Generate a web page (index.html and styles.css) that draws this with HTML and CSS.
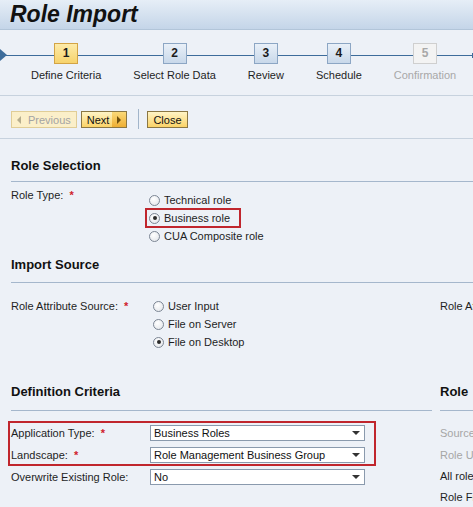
FILE: index.html
```html
<!DOCTYPE html>
<html lang="en">
<head>
    <meta charset="UTF-8">
    <meta name="viewport" content="width=device-width, initial-scale=1.0">
    <title>Role Import</title>
    <link rel="stylesheet" href="styles.css">
</head>
<body>
    <div class="title-bar">
        <h1>Role Import</h1>
    </div>

    <!-- wizard steps -->
    <div class="roadmap">
        <div class="step current">
            <span class="step-no">1</span>
            <span class="step-label">Define Criteria</span>
        </div>
        <div class="step">
            <span class="step-no">2</span>
            <span class="step-label">Select Role Data</span>
        </div>
        <div class="step">
            <span class="step-no">3</span>
            <span class="step-label">Review</span>
        </div>
        <div class="step">
            <span class="step-no">4</span>
            <span class="step-label">Schedule</span>
        </div>
        <div class="step disabled">
            <span class="step-no">5</span>
            <span class="step-label">Confirmation</span>
        </div>
    </div>

    <div class="toolbar">
        <button class="btn disabled" type="button"><span class="tri-left"></span>Previous</button>
        <button class="btn btn-next" type="button">Next<span class="btn-arrow"><span class="tri-right"></span></span></button>
        <span class="toolbar-sep"></span>
        <button class="btn" type="button">Close</button>
    </div>

    <div class="content">
        <h2 class="section-title role-selection">Role Selection</h2>
        <div class="form-row role-type">
            <div class="field-label narrow">Role Type: <span class="req">*</span></div>
            <div class="radio-group">
                <div class="radio"><span class="radio-dot"></span>Technical role</div>
                <div class="radio checked highlight"><span class="radio-dot"></span>Business role</div>
                <div class="radio"><span class="radio-dot"></span>CUA Composite role</div>
            </div>
        </div>

        <h2 class="section-title import-source">Import Source</h2>
        <div class="split attr-row">
            <div class="form-row">
                <div class="field-label">Role Attribute Source: <span class="req">*</span></div>
                <div class="radio-group">
                    <div class="radio"><span class="radio-dot"></span>User Input</div>
                    <div class="radio"><span class="radio-dot"></span>File on Server</div>
                    <div class="radio checked"><span class="radio-dot"></span>File on Desktop</div>
                </div>
            </div>
            <div class="side-text">Role Attributes:</div>
        </div>

        <div class="split definition">
            <div>
                <h2 class="section-title">Definition Criteria</h2>
                <div class="field-list">
                    <div class="highlight-box">
                        <div class="field-row">
                            <div class="field-label">Application Type: <span class="req">*</span></div>
                            <div class="select"><span>Business Roles</span><span class="tri-down"></span></div>
                        </div>
                        <div class="field-row short">
                            <div class="field-label">Landscape: <span class="req">*</span></div>
                            <div class="select"><span>Role Management Business Group</span><span class="tri-down"></span></div>
                        </div>
                    </div>
                    <div class="field-row tall">
                        <div class="field-label">Overwrite Existing Role:</div>
                        <div class="select"><span>No</span><span class="tri-down"></span></div>
                    </div>
                </div>
            </div>
            <div>
                <h2 class="section-title">Role  Update Settings</h2>
                <div class="field-list side-list">
                    <div class="side-row muted">Source System:</div>
                    <div class="side-row muted">Role Update Type:</div>
                    <div class="side-row compact">All roles from file</div>
                    <div class="side-row">Role Friendly Name:</div>
                </div>
            </div>
        </div>
    </div>
</body>
</html>
```

FILE: styles.css
```css
:root {
    --page-bg: #edf1f7;
    --road-line: #3d6c9b;
    --rule: #a5b7cc;
    --soft-rule: #c7d2de;
    --req: #d0212b;
    --mark: #c0262d;
}

body {
    margin: 0;
    background: var(--page-bg);
    font-family: "Liberation Sans", Arial, sans-serif;
    font-size: 11px;
    color: #1e1e1e;
    overflow: hidden;
}

/* title */
.title-bar {
    height: 30px;
    box-sizing: border-box;
    background: linear-gradient(#e6eef7, #c4d5e8);
    border-bottom: 1px solid #b2c5d9;
}

.title-bar h1 {
    margin: 0;
    padding-left: 10px;
    font-size: 23px;
    font-style: italic;
    font-weight: bold;
    line-height: 28px;
    color: #111;
}

/* roadmap */
.roadmap {
    display: flex;
    align-items: flex-start;
    height: 66px;
    box-sizing: border-box;
    padding-top: 13px;
    border-bottom: 1px solid var(--soft-rule);
    background: linear-gradient(var(--road-line), var(--road-line)) 0 25px / 100% 1px no-repeat;
}

.roadmap::before {
    content: "";
    border-left: 7px solid var(--road-line);
    border-top: 6px solid transparent;
    border-bottom: 6px solid transparent;
    margin: 6px 8px 0 0;
}

.roadmap::after {
    content: "";
    width: 5px;
    height: 5px;
    background: var(--road-line);
    margin: 10px 0 0 auto;
}

.step {
    display: flex;
    flex-direction: column;
    align-items: center;
    padding: 0 16px;
}

.step-no {
    width: 24px;
    height: 21px;
    box-sizing: border-box;
    border: 1px solid #8ca6c4;
    background: linear-gradient(#e9f0f8, #c8d8ea);
    font-size: 12px;
    font-weight: bold;
    text-align: center;
    line-height: 19px;
    color: #1b1b1b;
}

.step-label {
    margin-top: 4px;
    line-height: 14px;
    white-space: nowrap;
}

.step.current .step-no {
    border-color: #d3a445;
    background: linear-gradient(#fdeba9, #f7d36c);
}

.step.disabled .step-no {
    border-color: #cfcfcf;
    background: #f3f3f3;
    color: #a8a8a8;
}

.step.disabled .step-label {
    color: #a8a8a8;
}

/* toolbar */
.toolbar {
    display: flex;
    align-items: flex-start;
    height: 43px;
    box-sizing: border-box;
    padding: 15px 0 0 11px;
    border-bottom: 1px solid var(--soft-rule);
}

.btn {
    display: flex;
    align-items: center;
    height: 17px;
    box-sizing: border-box;
    margin: 0 4px 0 0;
    padding: 0 5px;
    border: 1px solid #8b7743;
    background: linear-gradient(#fff4c6, #fbd367);
    font-family: inherit;
    font-size: 11px;
    color: #111;
    cursor: pointer;
}

.btn.disabled {
    border-color: #e0cd97;
    background: #fbefc9;
    color: #a3a3a3;
}

.btn-next {
    padding-right: 0;
}

.btn-arrow {
    display: flex;
    align-items: center;
    justify-content: center;
    width: 14px;
    height: 100%;
    margin-left: 3px;
    background: linear-gradient(#fbd978, #eeaf34);
}

.tri-left {
    border-right: 4px solid #b6ad8e;
    border-top: 4px solid transparent;
    border-bottom: 4px solid transparent;
    margin-right: 7px;
}

.tri-right {
    border-left: 4px solid #6e4f0c;
    border-top: 4px solid transparent;
    border-bottom: 4px solid transparent;
}

.toolbar-sep {
    width: 1px;
    height: 20px;
    margin: -2px 8px 0 7px;
    background: #a2b5ca;
}

/* content */
.content {
    padding-left: 11px;
    width: 629px;
}

.section-title {
    margin: 0;
    font-size: 13px;
    font-weight: bold;
    line-height: 16px;
    padding-bottom: 10px;
    border-bottom: 1px solid var(--rule);
    color: #111;
    white-space: pre;
}

.section-title.role-selection {
    margin-top: 19px;
    padding-bottom: 7px;
}

.section-title.import-source {
    margin-top: 12px;
    padding-bottom: 9px;
}

.req {
    color: var(--req);
    font-weight: bold;
    margin-left: 3px;
}

.form-row {
    display: flex;
    line-height: 18px;
}

.role-type {
    margin-top: 4px;
}

.field-label {
    width: 139px;
    flex-shrink: 0;
    white-space: nowrap;
}

.field-label.narrow {
    width: 135px;
}

.radio-group {
    display: flex;
    flex-direction: column;
    align-items: flex-start;
    padding-top: 5px;
}

.attr-row .radio-group {
    padding-top: 0;
}

.radio {
    display: flex;
    align-items: center;
    height: 18px;
    padding: 0 10px 0 3px;
    white-space: nowrap;
}

.radio-dot {
    display: flex;
    align-items: center;
    justify-content: center;
    width: 11px;
    height: 11px;
    box-sizing: border-box;
    margin-right: 4px;
    border: 1px solid #7c8694;
    border-radius: 50%;
    background: radial-gradient(circle at 40% 35%, #ffffff, #e0e3e8);
}

.radio.checked .radio-dot::after {
    content: "";
    width: 4px;
    height: 4px;
    border-radius: 50%;
    background: #2b2b2b;
}

.radio.highlight {
    outline: 2px solid var(--mark);
    outline-offset: -1px;
}

.split {
    display: grid;
    grid-template-columns: 421px 200px;
    column-gap: 8px;
}

.attr-row {
    margin-top: 14px;
}

.side-text {
    line-height: 18px;
    white-space: nowrap;
}

.definition {
    margin-top: 33px;
}

.field-list {
    margin-top: 11px;
}

.highlight-box {
    width: 366px;
    margin-left: -2px;
    padding-left: 2px;
    box-sizing: border-box;
    outline: 2px solid var(--mark);
    outline-offset: -1px;
}

.field-row {
    display: flex;
    align-items: center;
    height: 22px;
    white-space: nowrap;
}

.field-row.short {
    height: 21px;
}

.field-row.tall {
    height: 23px;
}

.select {
    display: flex;
    align-items: center;
    justify-content: space-between;
    width: 215px;
    height: 16px;
    box-sizing: border-box;
    padding: 0 4px 0 3px;
    border: 1px solid #8a9aad;
    background: #fff;
    color: #111;
}

.tri-down {
    border-top: 4px solid #333;
    border-left: 4px solid transparent;
    border-right: 4px solid transparent;
}

.side-row {
    height: 22px;
    line-height: 22px;
    white-space: nowrap;
}

.side-row.compact {
    height: 20px;
    line-height: 20px;
}

.side-row.muted {
    color: #a6a6a6;
}
```
